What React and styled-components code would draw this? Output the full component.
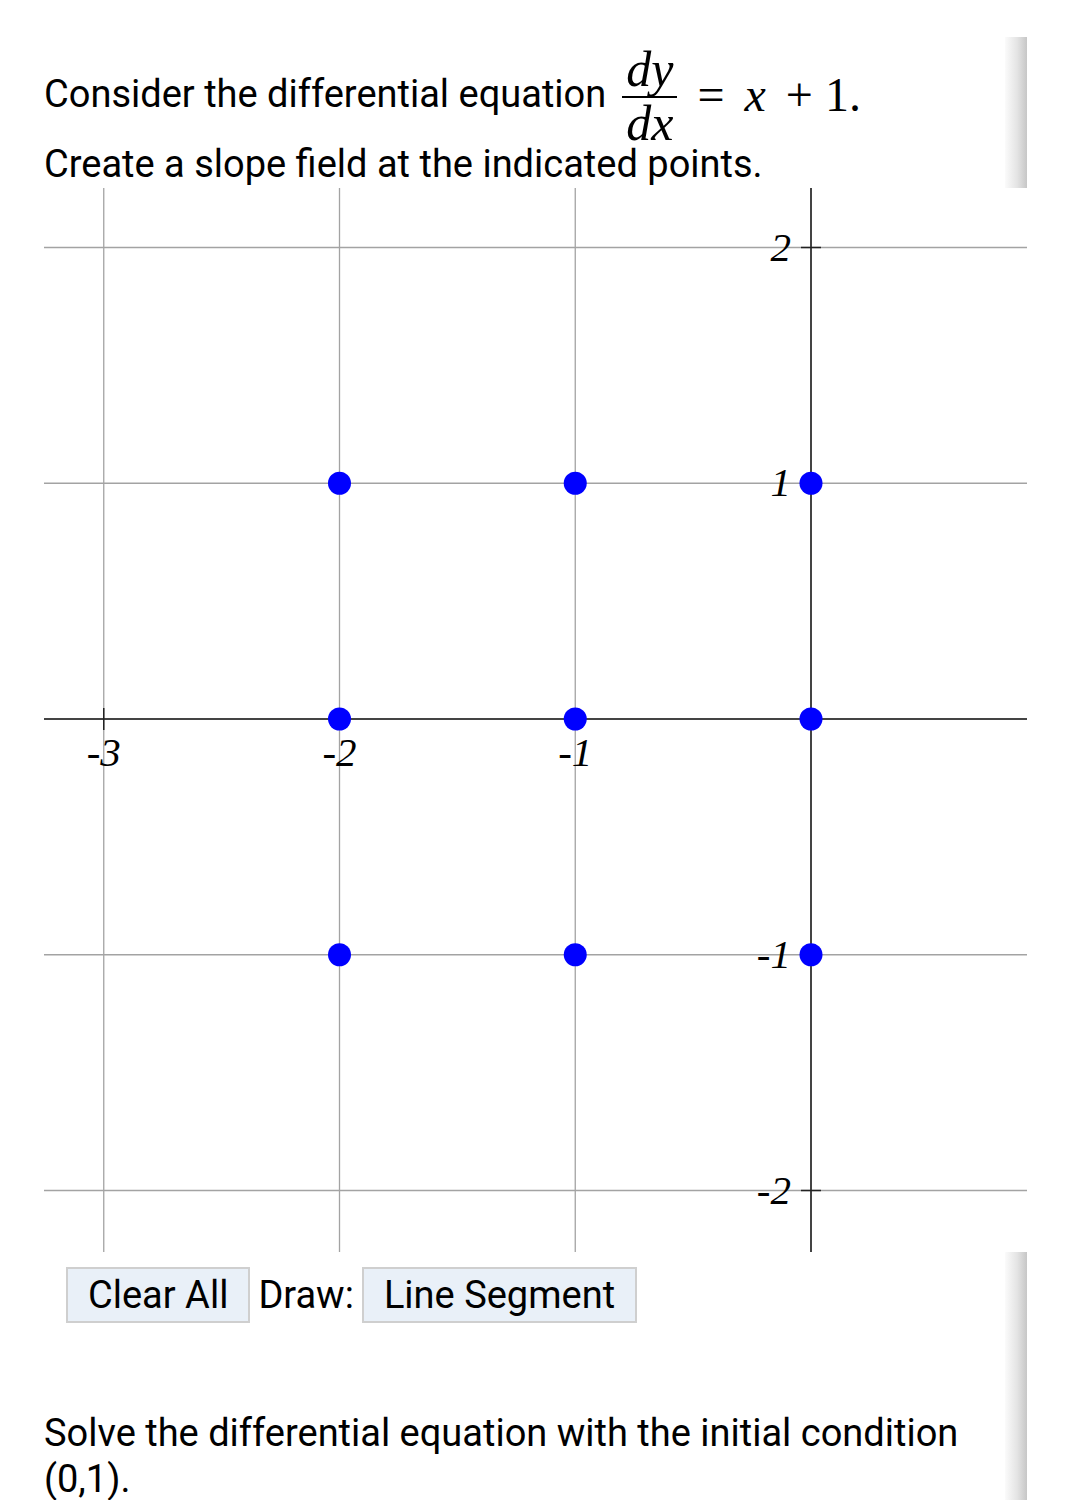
import React from 'react'
import styled, { createGlobalStyle } from 'styled-components'

const GlobalStyle = createGlobalStyle`
  body {
    margin: 0;
    background: #fff;
    color: #000;
    font-family: Roboto, "Liberation Sans", sans-serif;
  }
`

const Page = styled.div`
  width: 983px;
  padding: 37px 0 0 44px;
`

const Block = styled.div`
  display: flex;
  min-height: ${(p) => p.$minHeight || 0}px;
`

const Content = styled.div`
  flex: 1;
  min-width: 0;
`

const Shade = styled.div`
  width: 22px;
  flex-shrink: 0;
  background: linear-gradient(to right, #fbfbfb, #e4e4e4 55%, #c6c6c6);
`

const EquationLine = styled.div`
  display: flex;
  align-items: center;
  height: 98px;
  padding-top: 8px;
  font-size: 38px;
`

const Math = styled.span`
  font-family: "Liberation Serif", "DejaVu Serif", serif;
  font-size: 48px;
  display: inline-flex;
  align-items: center;
`

const Frac = styled.span`
  display: inline-flex;
  flex-direction: column;
  align-items: center;
  margin: 4px 20px 0 16px;
  font-size: 50px;
`

const FracPart = styled.span`
  font-style: italic;
  line-height: 38px;
  padding: ${(p) => (p.$bottom ? '6px 4px 0' : '0 4px 8px')};
`

const FracBar = styled.span`
  align-self: stretch;
  height: 2px;
  background: #000;
`

const Var = styled.i`
  font-style: italic;
`

const Op = styled.span`
  margin: 0 ${(p) => p.$space || 16}px;
`

const Line = styled.div`
  font-size: 38px;
  line-height: 43px;
  padding-bottom: 2px;
`

const Graph = styled.svg`
  display: block;
`

const Controls = styled.div`
  display: flex;
  align-items: center;
  gap: 8px;
  margin-top: 15px;
  padding-left: 22px;
  font-size: 38px;
`

const Button = styled.button`
  height: 56px;
  padding: 0 20px;
  border: 2px solid #cfcfcf;
  background: #e9f0f8;
  color: #000;
  font-family: Roboto, "Liberation Sans", sans-serif;
  font-size: 38px;
`

const Paragraph = styled.p`
  margin: 87px 0 0;
  font-size: 38px;
  line-height: 46px;
`

const U = 235.75
const OX = 767
const OY = 531
const W = 983
const H = 1064
const px = (x) => OX + x * U
const py = (y) => OY - y * U

const dots = []
;[-2, -1, 0].forEach((x) => [1, 0, -1].forEach((y) => dots.push([x, y])))

function SlopeGrid () {
  return (
    <Graph width={W} height={H} viewBox={`0 0 ${W} ${H}`}>
      {[-3, -2, -1].map((x) => (
        <line key={'v' + x} x1={px(x)} x2={px(x)} y1={0} y2={H} stroke="#a3a3a3" strokeWidth="1.3" />
      ))}
      {[2, 1, -1, -2].map((y) => (
        <line key={'h' + y} x1={0} x2={W} y1={py(y)} y2={py(y)} stroke="#a3a3a3" strokeWidth="1.3" />
      ))}
      <line x1={px(0)} x2={px(0)} y1={0} y2={H} stroke="#444" strokeWidth="2" />
      <line x1={0} x2={W} y1={py(0)} y2={py(0)} stroke="#444" strokeWidth="2" />
      <line x1={px(-3)} x2={px(-3)} y1={py(0) - 11} y2={py(0) + 11} stroke="#222" strokeWidth="1.5" />
      {[2, -2].map((y) => (
        <line key={'t' + y} x1={px(0) - 10} x2={px(0) + 10} y1={py(y)} y2={py(y)} stroke="#222" strokeWidth="1.5" />
      ))}
      <g fontFamily='"Liberation Serif", "DejaVu Serif", serif' fontStyle="italic" fontSize="41" fill="#000">
        {[-3, -2, -1].map((x) => (
          <text key={'lx' + x} x={px(x)} y={py(0) + 47} textAnchor="middle">{x}</text>
        ))}
        {[2, 1, -1, -2].map((y) => (
          <text key={'ly' + y} x={px(0) - 20} y={py(y) + 13} textAnchor="end">{y}</text>
        ))}
      </g>
      {dots.map(([x, y]) => (
        <circle key={x + ',' + y} cx={px(x)} cy={py(y)} r="11.5" fill="#0000ff" />
      ))}
    </Graph>
  )
}

export default function App () {
  return (
    <Page>
      <GlobalStyle />
      <Block>
        <Content>
          <EquationLine>
            <span>Consider the differential equation</span>
            <Math>
              <Frac>
                <FracPart>dy</FracPart>
                <FracBar />
                <FracPart $bottom>dx</FracPart>
              </Frac>
              =<Op $space={20}><Var>x</Var></Op>+<Op $space={12}>1.</Op>
            </Math>
          </EquationLine>
          <Line>Create a slope field at the indicated points.</Line>
        </Content>
        <Shade />
      </Block>
      <SlopeGrid />
      <Block $minHeight={260}>
        <Content>
          <Controls>
            <Button>Clear All</Button>
            <span>Draw:</span>
            <Button>Line Segment</Button>
          </Controls>
          <Paragraph>
            Solve the differential equation with the initial condition (0,1).
          </Paragraph>
        </Content>
        <Shade />
      </Block>
    </Page>
  )
}
